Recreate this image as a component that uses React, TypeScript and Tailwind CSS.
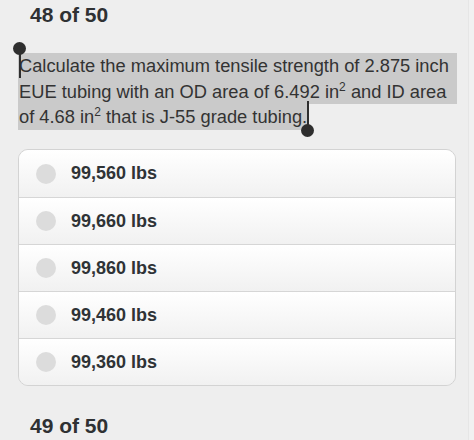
import React from "react";

const answers = ["99,560 lbs", "99,660 lbs", "99,860 lbs", "99,460 lbs", "99,360 lbs"];

function Handle({ flip }: { flip?: boolean }) {
  // selection handle: dot with a stem
  return (
    <span className={`absolute flex items-center ${flip ? "flex-col-reverse" : "flex-col"}`}>
      <span className="w-[13px] h-[13px] rounded-full bg-[#2e2e2e]" />
      <span className="w-[2px] h-[26px] bg-[#2e2e2e] -my-[3px]" />
    </span>
  );
}

export default function App() {
  return (
    <div
      className="w-[474px] h-[440px] overflow-hidden bg-[#eeeeee] flex text-[#2f3133]"
      style={{ fontFamily: '"Liberation Sans", Arial, sans-serif' }}
    >
      <div className="flex-1 flex flex-col">
        <h2 className="pl-[30px] pt-[1px] text-[21px] leading-[28px] font-bold">48 of 50</h2>

        <div className="relative mt-[24px] ml-[18px] mr-[11px] text-[18.3px] text-[#333]">
          <div className="h-[26px] leading-[26px] bg-[#cacaca] pl-[1px] whitespace-nowrap">
            Calculate the maximum tensile strength of 2.875 inch
          </div>
          <div className="h-[25px] leading-[25px] bg-[#cacaca] pl-[1px] whitespace-nowrap">
            EUE tubing with an OD area of 6.492 in<sup className="text-[12px] -top-[7px]">2</sup> and ID area
          </div>
          <div className="h-[26px] leading-[26px] whitespace-nowrap">
            <span className="inline-block h-[26px] bg-[#cacaca] pl-[1px] pr-[2px]">
              of 4.68 in<sup className="text-[12px] -top-[7px]">2</sup> that is J-55 grade tubing.
            </span>
          </div>
          <div className="absolute left-[-5px] top-[-11px]">
            <Handle />
          </div>
          <div className="absolute left-[283px] top-[51px]">
            <Handle flip />
          </div>
        </div>

        <div className="mt-[19px] ml-[18px] mr-[12px] border border-[#d3d3d3] rounded-[10px] overflow-hidden">
          {answers.map((a, i) => (
            <div
              key={a}
              className={`h-[47px] flex items-center bg-gradient-to-b from-white to-[#f1f1f1] ${
                i > 0 ? "border-t border-[#d6d6d6]" : ""
              }`}
            >
              <span className="ml-[17px] w-[20px] h-[20px] rounded-full bg-[#dcdcdc]" />
              <span className="ml-[15px] text-[18px] font-bold text-[#2f3336]">{a}</span>
            </div>
          ))}
        </div>

        <h2 className="pl-[30px] mt-[26px] text-[21px] leading-[28px] font-bold">49 of 50</h2>
      </div>
      <div className="w-[6px] bg-[#f1f1f1] border-l border-[#e6e6e6]" />
    </div>
  );
}
